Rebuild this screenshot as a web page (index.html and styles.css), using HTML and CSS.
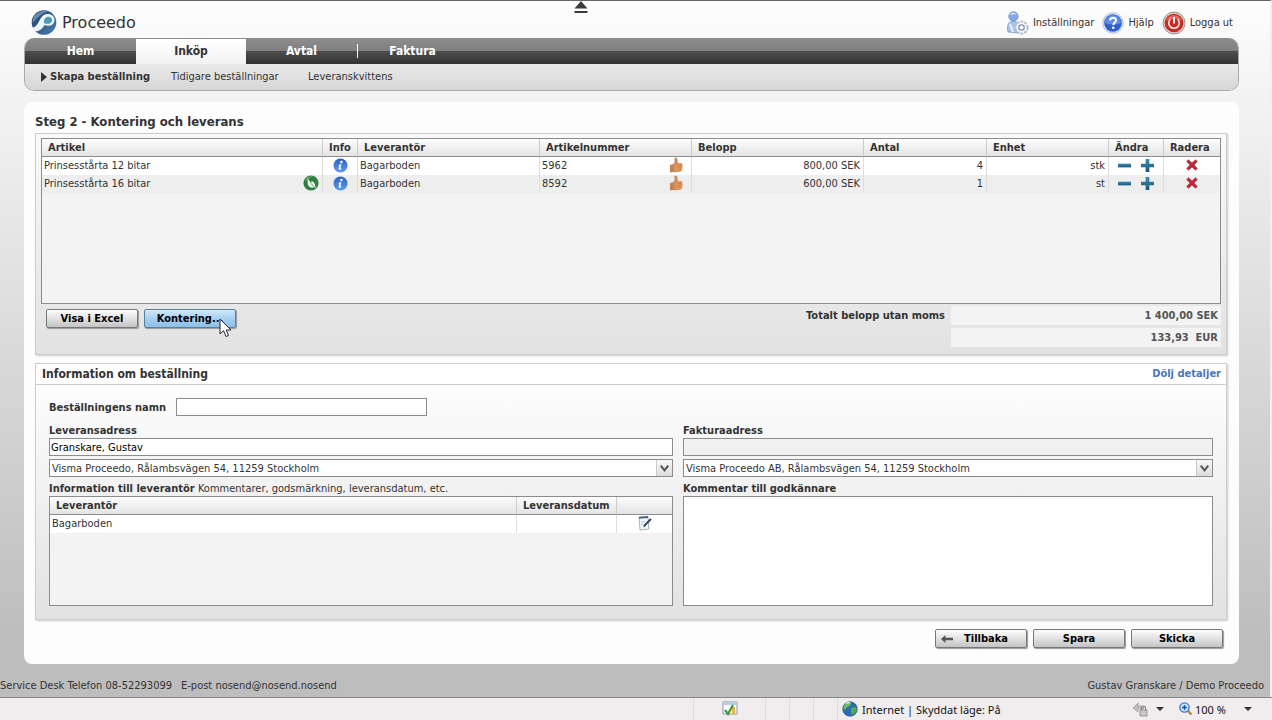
FILE: index.html
```html
<!DOCTYPE html>
<html lang="sv">
<head>
    <meta charset="UTF-8">
    <meta name="viewport" content="width=device-width, initial-scale=1.0">
    <title>Proceedo - Skapa beställning</title>
    <link rel="stylesheet" href="styles.css">
</head>
<body>
    <!-- Shared icons -->
    <svg class="sprite" aria-hidden="true">
        <defs>
            <linearGradient id="blueBall" x1="0" y1="0" x2="0" y2="1">
                <stop offset="0" stop-color="#2b62bd"/>
                <stop offset="1" stop-color="#5b9df2"/>
            </linearGradient>
            <linearGradient id="steel" x1="0" y1="0" x2="0" y2="1">
                <stop offset="0" stop-color="#3f8fae"/>
                <stop offset="1" stop-color="#175478"/>
            </linearGradient>
            <linearGradient id="skin" x1="0" y1="0" x2="1" y2="1">
                <stop offset="0" stop-color="#c98a5c"/>
                <stop offset="1" stop-color="#f39a55"/>
            </linearGradient>
        </defs>
        <symbol id="i-info" viewBox="0 0 16 16">
            <circle cx="8" cy="8" r="7.5" fill="url(#blueBall)"/>
            <circle cx="9" cy="4.2" r="1.3" fill="#fff"/>
            <path d="M6 7.2l3-.8-1.2 5 1.4-.4-.3.9c-1.5 1.1-3.2.8-2.9-.7l.8-3.3-1 .1z" fill="#fff"/>
        </symbol>
        <symbol id="i-leaf" viewBox="0 0 16 16">
            <circle cx="8" cy="8" r="7.6" fill="#2e7f42"/>
            <path d="M2 6a6.5 6.5 0 0 1 8-4.3C7 2 4 4 2 6z" fill="#7cbf86"/>
            <path d="M4.500 3l.3 6.500c1 3 4 4 6.500 2.500l1 1 .7-.7-1-1.300c.5-2-1-4.500-3.500-5l-.3 2.500z" fill="#eaf7e8"/>
            <path d="M8 8.500l3 3" stroke="#4b9a58" fill="none"/>
        </symbol>
        <symbol id="i-thumb" viewBox="0 0 14 16">
            <path d="M4.500 7.500L6 5 5.800 1c1.400-.6 2.200.6 2.400 2.200L8.500 6.500l3.500 0c1.300.2 1.500 1.500.9 2 .7.6.6 1.700 0 2 .5.800.2 1.600-.4 1.900.3.900-.2 1.700-1 1.800L6 15l-2-.5z" fill="url(#skin)" stroke="#b5703f" stroke-width=".5"/>
            <path d="M1 8l3.800-1v7.800L1 15.500z" fill="#c08359"/>
            <path d="M9 8.500h3.500M9 10.500h3.500M9 12.300h3" stroke="#c9753a" stroke-width=".5"/>
        </symbol>
        <symbol id="i-minus" viewBox="0 0 14 14">
            <path d="M0 5h14v4H0z" fill="url(#steel)"/>
        </symbol>
        <symbol id="i-plus" viewBox="0 0 14 14">
            <path d="M5 0h4v5h5v4H9v5H5V9H0V5h5z" fill="url(#steel)"/>
        </symbol>
        <symbol id="i-cross" viewBox="0 0 12 12">
            <path d="M2.5.8L6 4 9.5.8l1.800 1.700L8 6l3.300 3.400-1.800 1.800L6 8l-3.500 3.200-1.800-1.800L4 6 .7 2.500z" fill="#c22a3c" stroke="#96202e" stroke-width=".6"/>
        </symbol>
        <symbol id="i-chevron" viewBox="0 0 16 16">
            <path d="M4 5.500l4 5 4-5" fill="none" stroke="#555" stroke-width="2.200"/>
        </symbol>
    </svg>

    <div class="page">
        <button class="pull-up" aria-label="Visa verktygsfält">
            <svg width="14" height="13" viewBox="0 0 14 13"><path d="M7 0l6.500 7.500H.5z M.5 10h13v2H.5z" fill="#3c3c3c"/></svg>
        </button>

        <header class="header">
            <a class="logo" href="#">
                <svg width="26" height="26" viewBox="0 0 26 26">
                    <defs>
                        <linearGradient id="globe" x1="0" y1="0" x2="1" y2="1">
                            <stop offset="0" stop-color="#1d3c63"/>
                            <stop offset="1" stop-color="#4a82b4"/>
                        </linearGradient>
                    </defs>
                    <circle cx="13" cy="12.500" r="12.300" fill="url(#globe)"/>
                    <path d="M2 8C5 2 11 0 17 1.500 10 3 7 8 1.500 13z" fill="#6488b0"/>
                    <path d="M1.500 17.500C8 17 8 6.500 14 4.500c5-1.500 10 1.500 9.500 6-.5 4.500-5.500 6.500-10 4.500-1.500 3-5 6.500-9.500 6.500z" fill="#eef4f9"/>
                    <path d="M13 13c-.5-4 2-6.500 4.500-6.300 2.500.2 4 2 3.500 4.300-.6 2.600-4.500 3.800-8 2z" fill="#4b9abb"/>
                </svg>
                <span>Proceedo</span>
            </a>
            <nav class="tools">
                <a href="#">
                    <svg width="24" height="24" viewBox="0 0 24 24">
                        <path d="M3 21c-2-8 2-11 5-11s6 2 7 6l-2 6z" fill="#a9c3ec" stroke="#7391c8" stroke-width=".7"/>
                        <circle cx="8.500" cy="5.500" r="4.700" fill="#86a8e2" stroke="#6887c0" stroke-width=".7"/>
                        <path d="M5 4c1-3 5-3 6.500-.5C9 3 7 3 5 4z" fill="#e8f0fc"/>
                        <path d="M5 13l3 8" stroke="#eef4ff" stroke-width="2"/>
                        <circle cx="16.500" cy="16.500" r="6" fill="#eef2f7" stroke="#b3bac6" stroke-width="2" stroke-dasharray="2.600 1.200"/>
                        <circle cx="16.500" cy="16.500" r="5" fill="#f3f5f9"/>
                        <circle cx="16.500" cy="16.500" r="2.700" fill="#fff" stroke="#7f8ea8" stroke-width="1.200"/>
                    </svg>
                    Inställningar
                </a>
                <a href="#">
                    <svg width="22" height="22" viewBox="0 0 22 22">
                        <circle cx="11" cy="11" r="10.300" fill="#dbe4f3" stroke="#a4b4d4" stroke-width=".7"/>
                        <circle cx="11" cy="11" r="8.800" fill="#2f5fca"/>
                        <path d="M3 11a8 8 0 0 1 16 0c-5 2-11 2-16 0z" fill="#5f8ae2"/>
                        <path d="M8 8.500c.2-3.700 6-3.500 6 0 0 2-2.700 2.200-2.700 4.500" fill="none" stroke="#fff" stroke-width="2"/>
                        <circle cx="11.200" cy="15.700" r="1.300" fill="#fff"/>
                    </svg>
                    Hjälp
                </a>
                <a href="#">
                    <svg width="24" height="24" viewBox="0 0 24 24">
                        <circle cx="12" cy="12" r="11" fill="#d9d0ce" stroke="#9d9391"/>
                        <circle cx="12" cy="12" r="9.300" fill="#c92a22"/>
                        <path d="M4 10a8.500 8.500 0 0 1 16 0c-4-3-12-3-16 0z" fill="#e2695e"/>
                        <path d="M8.500 8a5.300 5.300 0 1 0 7 0" fill="none" stroke="#fbe3e0" stroke-width="1.600"/>
                        <path d="M12 6v6.500" stroke="#fff" stroke-width="2"/>
                    </svg>
                    Logga ut
                </a>
            </nav>
        </header>

        <div class="menu">
            <nav class="tabs">
                <a href="#">Hem</a>
                <a href="#" class="active">Inköp</a>
                <a href="#">Avtal</a>
                <a href="#" class="divided">Faktura</a>
            </nav>
            <nav class="subtabs">
                <a href="#" class="active">
                    <svg width="6" height="10" viewBox="0 0 6 10"><path d="M0 0l6 5-6 5z" fill="#333"/></svg>
                    Skapa beställning
                </a>
                <a href="#">Tidigare beställningar</a>
                <a href="#">Leveranskvittens</a>
            </nav>
        </div>

        <main class="content">
            <h1>Steg 2 - Kontering och leverans</h1>

            <section class="box order">
                <div class="grid-frame articles">
                    <table>
                        <colgroup>
                            <col>
                            <col class="c-info">
                            <col class="c-supplier">
                            <col class="c-number">
                            <col class="c-amount">
                            <col class="c-qty">
                            <col class="c-unit">
                            <col class="c-edit">
                            <col class="c-delete">
                        </colgroup>
                        <thead>
                            <tr>
                                <th>Artikel</th>
                                <th>Info</th>
                                <th>Leverantör</th>
                                <th>Artikelnummer</th>
                                <th>Belopp</th>
                                <th>Antal</th>
                                <th>Enhet</th>
                                <th>Ändra</th>
                                <th>Radera</th>
                            </tr>
                        </thead>
                        <tbody>
                            <tr>
                                <td>Prinsesstårta 12 bitar</td>
                                <td class="center"><button class="icon" aria-label="Info"><svg width="15" height="15"><use href="#i-info"/></svg></button></td>
                                <td>Bagarboden</td>
                                <td><div class="split">5962 <svg width="14" height="16"><use href="#i-thumb"/></svg></div></td>
                                <td class="num">800,00 SEK</td>
                                <td class="num">4</td>
                                <td class="num">stk</td>
                                <td class="center">
                                    <div class="pair">
                                        <button class="icon" aria-label="Minska"><svg width="13" height="13"><use href="#i-minus"/></svg></button>
                                        <button class="icon" aria-label="Öka"><svg width="13" height="13"><use href="#i-plus"/></svg></button>
                                    </div>
                                </td>
                                <td class="center"><button class="icon" aria-label="Radera"><svg width="12" height="12"><use href="#i-cross"/></svg></button></td>
                            </tr>
                            <tr>
                                <td><div class="split tight">Prinsesstårta 16 bitar <svg width="16" height="16"><use href="#i-leaf"/></svg></div></td>
                                <td class="center"><button class="icon" aria-label="Info"><svg width="15" height="15"><use href="#i-info"/></svg></button></td>
                                <td>Bagarboden</td>
                                <td><div class="split">8592 <svg width="14" height="16"><use href="#i-thumb"/></svg></div></td>
                                <td class="num">600,00 SEK</td>
                                <td class="num">1</td>
                                <td class="num">st</td>
                                <td class="center">
                                    <div class="pair">
                                        <button class="icon" aria-label="Minska"><svg width="13" height="13"><use href="#i-minus"/></svg></button>
                                        <button class="icon" aria-label="Öka"><svg width="13" height="13"><use href="#i-plus"/></svg></button>
                                    </div>
                                </td>
                                <td class="center"><button class="icon" aria-label="Radera"><svg width="12" height="12"><use href="#i-cross"/></svg></button></td>
                            </tr>
                        </tbody>
                    </table>
                </div>

                <div class="order-foot">
                    <div class="actions">
                        <button class="btn">Visa i Excel</button>
                        <div class="pointed">
                            <button class="btn hot">Kontering...</button>
                            <svg class="pointer" width="13" height="20" viewBox="0 0 13 20"><path d="M1 1v15l3.500-3.300L7 18.500l2.500-1L7.200 12H12z" fill="#fff" stroke="#223" stroke-width="1"/></svg>
                        </div>
                    </div>
                    <dl class="totals">
                        <dt>Totalt belopp utan moms</dt>
                        <dd>1 400,00 SEK</dd>
                        <dd>133,93&nbsp; EUR</dd>
                    </dl>
                </div>
            </section>

            <section class="box details">
                <div class="details-head">
                    <h2>Information om beställning</h2>
                    <a href="#">Dölj detaljer</a>
                </div>
                <form class="details-body">
                    <div class="name-row">
                        <label for="order-name">Beställningens namn</label>
                        <input type="text" id="order-name">
                    </div>
                    <div class="columns">
                        <div class="column">
                            <label for="ship-name">Leveransadress</label>
                            <input type="text" id="ship-name" value="Granskare, Gustav">
                            <div class="select">
                                <select aria-label="Leveransadress">
                                    <option>Visma Proceedo, Rålambsvägen 54, 11259 Stockholm</option>
                                </select>
                                <svg width="16" height="16"><use href="#i-chevron"/></svg>
                            </div>
                            <p class="caption"><b>Information till leverantör</b> Kommentarer, godsmärkning, leveransdatum, etc.</p>
                            <div class="grid-frame suppliers">
                                <table>
                                    <colgroup>
                                        <col>
                                        <col class="c-date">
                                        <col class="c-note">
                                    </colgroup>
                                    <thead>
                                        <tr>
                                            <th>Leverantör</th>
                                            <th>Leveransdatum</th>
                                            <th></th>
                                        </tr>
                                    </thead>
                                    <tbody>
                                        <tr>
                                            <td>Bagarboden</td>
                                            <td></td>
                                            <td class="center">
                                                <button type="button" class="icon" aria-label="Redigera">
                                                    <svg width="14" height="16" viewBox="0 0 14 16">
                                                        <path d="M1 2.500l9-.7.8 12.200-8.800 1z" fill="#f4f8fa" stroke="#8fa0aa" stroke-width=".8"/>
                                                        <path d="M.8 1.800l9.200-.8.200 2-9.200.8z" fill="#46677a"/>
                                                        <path d="M3 7l4-.3M3 9.500l2-.2" stroke="#b4c0c6"/>
                                                        <path d="M13 4L6 11" stroke="#2c4656" stroke-width="1.800"/>
                                                        <path d="M6.500 10L5 12.500l2.500-1.300z" fill="#2c4656"/>
                                                    </svg>
                                                </button>
                                            </td>
                                        </tr>
                                    </tbody>
                                </table>
                            </div>
                        </div>
                        <div class="column">
                            <label for="bill-name">Fakturaadress</label>
                            <input type="text" id="bill-name" disabled>
                            <div class="select">
                                <select aria-label="Fakturaadress">
                                    <option>Visma Proceedo AB, Rålambsvägen 54, 11259 Stockholm</option>
                                </select>
                                <svg width="16" height="16"><use href="#i-chevron"/></svg>
                            </div>
                            <label class="caption" for="comment">Kommentar till godkännare</label>
                            <textarea id="comment"></textarea>
                        </div>
                    </div>
                </form>
            </section>

            <div class="submit-row">
                <button class="btn back">
                    <svg width="12" height="8" viewBox="0 0 12 8"><path d="M0 4l4.500-4v2.800H12v2.400H4.500V8z" fill="#555"/></svg>
                    Tillbaka
                </button>
                <button class="btn">Spara</button>
                <button class="btn">Skicka</button>
            </div>
        </main>

        <footer class="footer">
            <div class="contact">
                <span>Service Desk Telefon 08-52293099</span>
                <span>E-post nosend@nosend.nosend</span>
            </div>
            <span>Gustav Granskare / Demo Proceedo</span>
        </footer>
    </div>

    <div class="statusbar">
        <div class="cell first">
            <svg width="16" height="16" viewBox="0 0 16 16">
                <path d="M1 1h14v12H1z" fill="#fff" stroke="#8a97a8"/>
                <path d="M1 1h14v3H1z" fill="#b8cbe2"/>
                <path d="M10 6h3v7h-3z" fill="#e2b64a"/>
                <path d="M3 9l3 4 5-9" fill="none" stroke="#3f9a3a" stroke-width="2.200"/>
            </svg>
        </div>
        <div class="cell"></div>
        <div class="cell"></div>
        <div class="cell"></div>
        <div class="cell zone">
            <svg width="16" height="16" viewBox="0 0 16 16">
                <circle cx="8" cy="8" r="7.300" fill="#2b6db5" stroke="#1d4a80" stroke-width=".6"/>
                <path d="M3 3c2-2 5-2 6-1L8 5 5 6 3 9 1 7z" fill="#6cbf5a"/>
                <path d="M9 7l4-1 2 2-2 4-3 2-1-4z" fill="#58ad4c"/>
                <path d="M4 2.500c1.500-1 3-1 4-.8" stroke="#d6ecff" stroke-width="1.200" fill="none"/>
            </svg>
            <span>Internet | Skyddat läge: På</span>
        </div>
        <button class="status-menu lock" aria-label="Skydd">
            <svg width="18" height="16" viewBox="0 0 18 16">
                <path d="M1 7l5-5v3c3-.5 5 .5 6 2l-2 2c-1-1.200-2-1.500-4-1.200V11z" fill="#bdbdbd" stroke="#999" stroke-width=".7"/>
                <path d="M8 9h7v6H8z" fill="#c9c9c9" stroke="#888" stroke-width=".8"/>
                <path d="M9.500 9V7c0-2.500 4-2.500 4 0v2" fill="none" stroke="#888" stroke-width="1.200"/>
            </svg>
            <svg width="8" height="4" viewBox="0 0 8 4"><path d="M0 0h8L4 4z" fill="#333"/></svg>
        </button>
        <button class="status-menu zoom">
            <svg width="14" height="14" viewBox="0 0 14 14">
                <path d="M8.500 8.500l4 4" stroke="#b9853f" stroke-width="2.400"/>
                <circle cx="5.500" cy="5.500" r="4.600" fill="#d5e8fb" stroke="#3e79c6" stroke-width="1.400"/>
                <path d="M3 5.500h5M5.500 3v5" stroke="#1f55ab" stroke-width="1.500"/>
            </svg>
            <span>100 %</span>
            <svg class="drop" width="8" height="4" viewBox="0 0 8 4"><path d="M0 0h8L4 4z" fill="#333"/></svg>
        </button>
    </div>
</body>
</html>
```

FILE: styles.css
```css
* {
    box-sizing: border-box;
}

body {
    font-family: 'DejaVu Sans Condensed', 'Noto Sans', sans-serif;
    font-size: 11px;
    line-height: 15px;
    color: #333;
    margin: 0;
    min-height: 100vh;
    display: flex;
    flex-direction: column;
}

a {
    color: inherit;
    text-decoration: none;
}

button, input, select, textarea {
    font: inherit;
    color: inherit;
}

svg {
    flex: none;
    display: block;
}

.sprite {
    position: absolute;
    width: 0;
    height: 0;
}

.page {
    position: relative;
    flex: 1;
    padding: 0 31px 0 24px;
    border-top: 1px solid #666;
    border-right: 2px solid #f0f0f0;
    background: linear-gradient(#fdfdfd, #f2f2f2 15%, #bdbdbd 92%);
}

/* Header */
.pull-up {
    position: absolute;
    top: 0;
    left: 50%;
    margin-left: -61px;
    padding: 0;
    border: none;
    background: none;
}

.header {
    display: flex;
    justify-content: space-between;
    align-items: center;
    height: 37px;
    padding: 6px 6px 0 7px;
}

.logo {
    display: flex;
    align-items: center;
    gap: 5px;
    font-family: 'DejaVu Sans', sans-serif;
    font-size: 16px;
}

.tools {
    display: flex;
    gap: 8px;
}

.tools a {
    display: flex;
    align-items: center;
    gap: 4px;
}

/* Menu */
.menu {
    border: 1px solid #aaa;
    border-top: none;
    border-radius: 10px;
    overflow: hidden;
}

.tabs {
    display: flex;
    height: 26px;
    background: linear-gradient(#8e8e8e, #7e7e7e 50%, #4e4e4e 50%, #333);
}

.tabs a {
    width: 111px;
    text-align: center;
    font-size: 12px;
    font-weight: bold;
    line-height: 26px;
    color: #fff;
}

.tabs .active {
    width: 110px;
    margin-top: 1px;
    background: linear-gradient(#fff, #f2f2f2);
    color: #333;
    line-height: 25px;
}

.tabs .divided {
    background: linear-gradient(#fff, #fff) no-repeat 0 6px / 1px 14px;
}

.subtabs {
    display: flex;
    gap: 21px;
    height: 26px;
    padding-left: 16px;
    background: linear-gradient(#eaeaea, #d6d6d6);
    line-height: 26px;
}

.subtabs a {
    min-width: 116px;
}

.subtabs .active {
    display: flex;
    align-items: center;
    gap: 3px;
    min-width: 109px;
    font-weight: bold;
}

/* Content */
.content {
    margin-top: 11px;
    padding: 10px 12px 16px 11px;
    background: #fdfdfd;
    border-radius: 8px;
}

h1, h2 {
    margin: 0;
    font-size: 13px;
    line-height: 20px;
}

h2 {
    font-size: 12px;
}

.box {
    border: 1px solid #ccc;
    box-shadow: 1px 1px 2px #ccc;
}

.order {
    margin-top: 1px;
    padding: 4px 5px 7px;
    background: linear-gradient(#fafafa, #e2e2e2);
}

.grid-frame {
    border: 1px solid #8c8c8c;
    background: #f3f3f3;
}

.articles {
    height: 166px;
}

.suppliers {
    height: 110px;
}

table {
    width: 100%;
    table-layout: fixed;
    border-collapse: separate;
    border-spacing: 0;
}

th {
    height: 18px;
    padding: 0 6px;
    text-align: left;
    background: linear-gradient(#fdfdfd, #e4e4e4);
    border-right: 1px solid #ccc;
    border-bottom: 1px solid #8c8c8c;
    line-height: 17px;
    white-space: nowrap;
}

td {
    height: 18px;
    padding: 0 3px 2px 2px;
    background: #fff;
    border-right: 1px solid #ddd;
}

th:last-child, td:last-child {
    border-right: none;
}

tbody tr:nth-child(even) td {
    background: #eee;
}

.c-info { width: 35px; }
.c-supplier { width: 182px; }
.c-number { width: 152px; }
.c-amount { width: 172px; }
.c-qty { width: 123px; }
.c-unit { width: 122px; }
.c-edit { width: 55px; }
.c-delete { width: 56px; }
.c-date { width: 100px; }
.c-note { width: 55px; }

.num {
    text-align: right;
}

td.center {
    padding: 0 0 2px;
}

.split {
    display: flex;
    justify-content: space-between;
    align-items: center;
    height: 16px;
    padding-right: 5px;
}

.split.tight {
    padding-right: 0;
}

.pair {
    display: flex;
    justify-content: center;
    gap: 10px;
}

.icon {
    display: block;
    margin: 0 auto;
    padding: 0;
    border: none;
    background: none;
    cursor: pointer;
}

.pair .icon {
    margin: 0;
}

.order-foot {
    display: flex;
    justify-content: space-between;
    padding-top: 2px;
}

.actions {
    display: flex;
    gap: 6px;
    padding: 3px 0 0 5px;
}

.btn {
    width: 92px;
    height: 19px;
    padding: 0;
    border: 1px solid #777;
    border-radius: 2px;
    background: linear-gradient(#fdfdfd, #e2e2e2 50%, #c4c4c4);
    box-shadow: 1px 1px 1px #999;
    color: #000;
    font-weight: bold;
    line-height: 16px;
    cursor: pointer;
}

.hot {
    border-color: #5a7f9c;
    background: linear-gradient(#d2eafa, #a5d0f0 50%, #8dc0e8);
}

.pointed {
    position: relative;
}

.pointer {
    position: absolute;
    left: 75px;
    top: 9px;
}

.totals {
    display: grid;
    grid-template-columns: auto 270px;
    gap: 3px 6px;
    margin: 0;
    font-weight: bold;
    line-height: 19px;
}

.totals dd {
    grid-column: 2;
    margin: 0;
    padding-right: 3px;
    background: #f3f3f3;
    color: #555;
    text-align: right;
}

/* Order details */
.details {
    margin-top: 8px;
    background: linear-gradient(#fff, #f4f4f4 40%, #e2e2e2);
}

.details-head {
    display: flex;
    justify-content: space-between;
    padding: 0 5px 0 6px;
    border-bottom: 1px solid #ccc;
    background: #fff;
}

.details-head a {
    color: #4878be;
    font-weight: bold;
    line-height: 20px;
}

.details-body {
    padding: 13px;
}

label {
    font-weight: bold;
}

.name-row {
    display: flex;
    align-items: center;
    gap: 10px;
    margin-bottom: 7px;
}

.name-row input {
    width: 251px;
}

.columns {
    display: grid;
    grid-template-columns: 624fr 530fr;
    gap: 10px;
}

.column {
    display: flex;
    flex-direction: column;
}

input, select, textarea {
    height: 18px;
    padding: 0 1px;
    border: 1px solid #8c8c8c;
    border-radius: 0;
    background: #fff;
    outline: none;
}

input {
    color: #000;
}

input:disabled {
    background: #f0f0f0;
}

textarea {
    height: 110px;
    resize: none;
}

.select {
    position: relative;
    margin-top: 3px;
}

.select select {
    display: block;
    width: 100%;
    padding-left: 2px;
    appearance: none;
}

.select svg {
    position: absolute;
    top: 1px;
    right: 1px;
    border-left: 1px solid #ccc;
    background: linear-gradient(#f8f8f8, #dcdcdc);
    pointer-events: none;
}

.caption {
    margin: 4px 0 0;
}

.submit-row {
    display: flex;
    justify-content: flex-end;
    gap: 6px;
    padding: 9px 4px 0 0;
}

.back {
    display: flex;
    align-items: center;
    gap: 11px;
    padding-left: 5px;
}

/* Footer */
.footer {
    display: flex;
    justify-content: space-between;
    margin: 0 -25px 0 -24px;
    padding: 14px 0 4px;
}

.contact {
    display: flex;
    gap: 9px;
}

.statusbar {
    display: flex;
    height: 23px;
    border-top: 1px solid #888;
    background: #f1edee;
    color: #111;
    font-family: 'Noto Sans', sans-serif;
    font-size: 11px;
}

.cell {
    display: flex;
    align-items: center;
    width: 24px;
    border-left: 1px solid #ddd;
}

.cell.first {
    width: 72px;
    padding-left: 28px;
    margin-left: auto;
}

.cell.zone {
    width: 295px;
    padding-left: 4px;
    gap: 4px;
}

.status-menu {
    display: flex;
    align-items: center;
    gap: 6px;
    padding: 0;
    border: none;
    background: none;
}

.lock {
    width: 47px;
}

.zoom {
    width: 93px;
    gap: 2px;
}

.drop {
    margin-left: 16px;
}
```
